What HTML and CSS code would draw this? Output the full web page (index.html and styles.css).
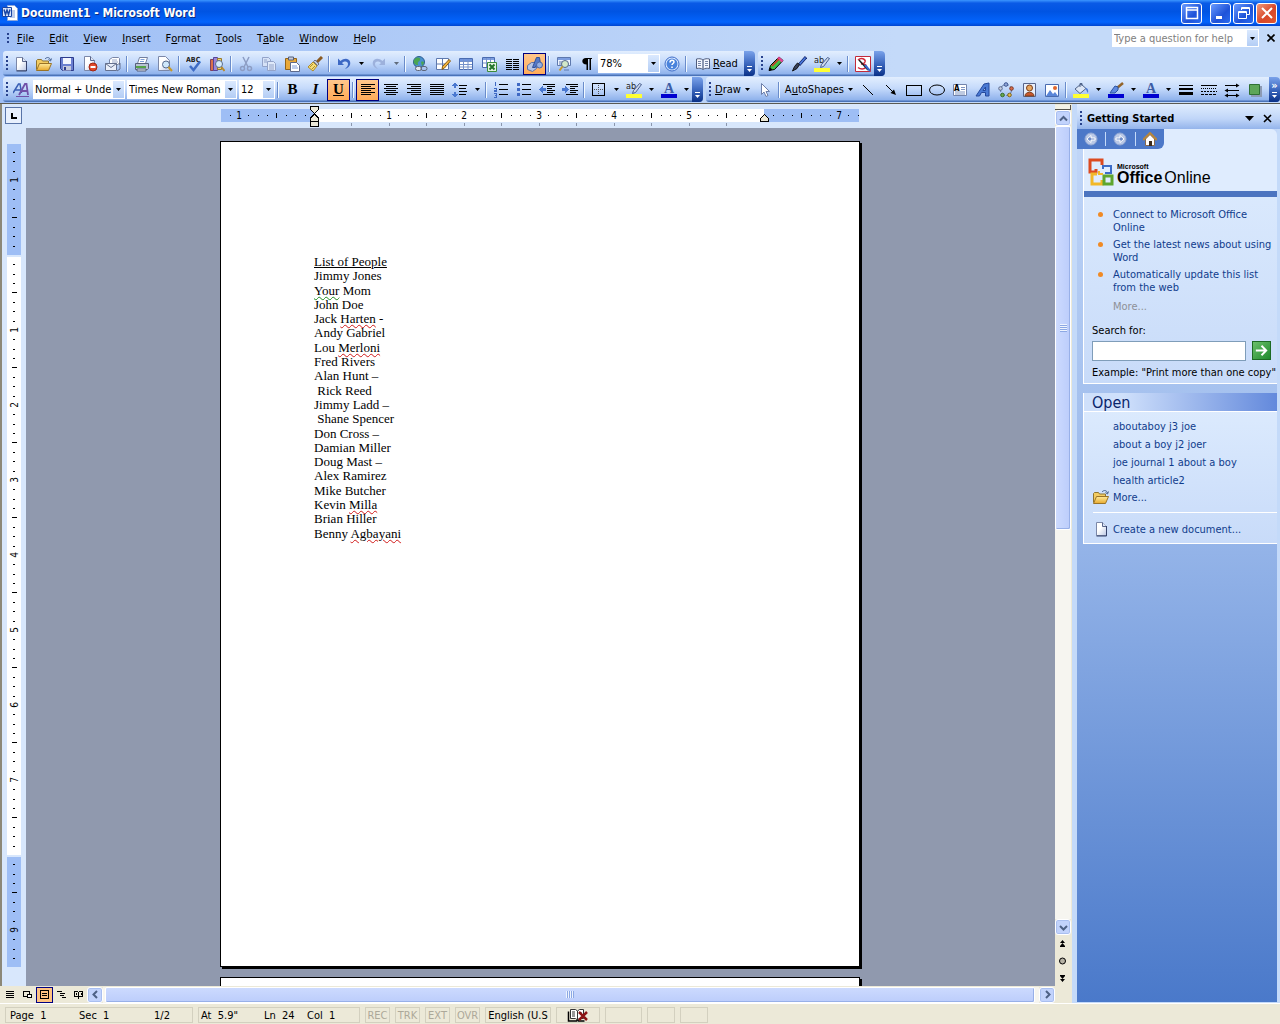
FILE: index.html
```html
<!DOCTYPE html>
<html lang="en">
<head>
    <meta charset="UTF-8">
    <meta name="viewport" content="width=device-width, initial-scale=1">
    <title>Document1 - Microsoft Word</title>
    <link rel="stylesheet" href="styles.css">
</head>
<body>

<!-- shared icons -->
<svg class="defs" aria-hidden="true">
    <linearGradient id="g-page" x1="0" y1="0" x2="1" y2="1"><stop offset="0.4" stop-color="#fff"/><stop offset="1" stop-color="#b9c6e4"/></linearGradient>
    <linearGradient id="g-folder" x1="0" y1="0" x2="0" y2="1"><stop offset="0" stop-color="#ffeb9c"/><stop offset="1" stop-color="#e8a92c"/></linearGradient>
    <symbol id="down" viewBox="0 0 5 3"><path d="M0 0h5L2.500 3z"/></symbol>
    <symbol id="i-new" viewBox="0 0 16 16"><path d="M3.500 1.500h6l4 4v9h-10z" fill="url(#g-page)" stroke="#7c88a8"/><path d="M9.500 1.500v4h4" fill="#dde5f5" stroke="#5a678c"/><path d="M13.500 5v10h-10" fill="none" stroke="#35426b"/></symbol>
    <symbol id="i-open" viewBox="0 0 16 16"><path d="M.5 13.500v-9l1-1h4l1 1.500h6v2" fill="#f3cc62" stroke="#8f7431"/><path d="M.5 14.500l3-7h12l-3 7z" fill="url(#g-folder)" stroke="#9a7326"/><path d="M9 3c2-2.500 5-1.500 5.500 1M12.500 3.500l2 1.500 1-2.500" fill="none" stroke="#44608f"/></symbol>
    <pattern id="inch-h" x="93" y="0" width="75" height="13" patternUnits="userSpaceOnUse"><path d="M9 6h1v1h-1zM19 6h1v1h-1zM28 6h1v1h-1zM37 4h1v5h-1zM47 6h1v1h-1zM56 6h1v1h-1zM66 6h1v1h-1z"/></pattern>
    <pattern id="inch-v" x="0" y="111" width="14" height="75" patternUnits="userSpaceOnUse"><path d="M6 9h2v1h-2zM6 19h2v1h-2zM6 28h2v1h-2zM5 37h5v1h-5zM6 47h2v1h-2zM6 56h2v1h-2zM6 66h2v1h-2z"/></pattern>
</svg>

<header class="titlebar">
    <svg class="icon" viewBox="0 0 16 16"><path d="M5.500.5h7l3 3v12h-10z" fill="#fff" stroke="#8ba6dc"/><path d="M8 6h5M8 8h5M8 10h5M8 12h5" stroke="#7d9ad8"/><path d="M.5 2.500h9v9h-9z" fill="#dbe6fb" stroke="#1b46a4"/><path d="M2 4.500l1.500 5L5 5l1.500 4.500L8 4.500" fill="none" stroke="#1b46a4" stroke-width="1.500"/></svg>
    <h1>Document1 - Microsoft Word</h1>
    <div class="window-buttons">
        <button class="wb first" aria-label="Full screen"><svg viewBox="0 0 16 16"><path d="M2.500 2.500h11v11h-11zM3 5h10" fill="none" stroke="#fff" stroke-width="1.500"/></svg></button>
        <button class="wb" aria-label="Minimize"><svg viewBox="0 0 16 16"><path d="M3 11h6v3H3z" fill="#fff"/></svg></button>
        <button class="wb" aria-label="Restore"><svg viewBox="0 0 16 16"><path d="M5.500 5V2.500h8v7H11M2.500 6.500h8v7h-8zM2.500 7.500h8M6 3.500h7" fill="none" stroke="#fff"/></svg></button>
        <button class="wb close" aria-label="Close"><svg viewBox="0 0 16 16"><path d="M3 3l10 10M13 3L3 13" stroke="#fff" stroke-width="2"/></svg></button>
    </div>
</header>

<nav class="menubar">
    <span class="grip"></span>
    <button><u>F</u>ile</button>
    <button><u>E</u>dit</button>
    <button><u>V</u>iew</button>
    <button><u>I</u>nsert</button>
    <button>F<u>o</u>rmat</button>
    <button><u>T</u>ools</button>
    <button>T<u>a</u>ble</button>
    <button><u>W</u>indow</button>
    <button><u>H</u>elp</button>
    <div class="combo ask">
        <input type="text" placeholder="Type a question for help" aria-label="Type a question for help">
        <span class="combo-arrow"><svg class="down"><use href="#down"/></svg></span>
    </div>
    <button class="close-doc" aria-label="Close document"><svg viewBox="0 0 8 8"><path d="M.5.5l7 7M7.500.5l-7 7" stroke="#000" stroke-width="1.600"/></svg></button>
</nav>

<div class="toolbar-row">
    <div class="toolbar">
        <span class="grip"></span>
        <button class="tb" aria-label="New"><svg class="icon"><use href="#i-new"/></svg></button>
        <button class="tb" aria-label="Open"><svg class="icon"><use href="#i-open"/></svg></button>
        <button class="tb" aria-label="Save"><svg class="icon" viewBox="0 0 16 16"><path d="M1.500 1.500h13v13h-11l-2-2z" fill="#6b7fd0" stroke="#2d3c8c"/><path d="M4 2h8v6H4z" fill="#f2f5ff"/><path d="M4 10h8v4.500H4z" fill="#c5c9dc"/><path d="M5 11h2v3H5z" fill="#2d3c8c"/></svg></button>
        <button class="tb" aria-label="Permission"><svg class="icon" viewBox="0 0 16 16"><path d="M2.500.5h6l4 4v10h-10z" fill="url(#g-page)" stroke="#7c88a8"/><path d="M8.500.5v4h4" fill="#dde5f5" stroke="#5a678c"/><circle cx="11" cy="11" r="4" fill="#e0492c" stroke="#a32612"/><path d="M8.500 11h5" stroke="#fff" stroke-width="2"/></svg></button>
        <button class="tb" aria-label="E-mail"><svg class="icon" viewBox="0 0 16 16"><path d="M4.500 7V3.500l3-2h6l1 1V9" fill="#fff" stroke="#7a86a6"/><path d="M7 4h5M7 6h6" stroke="#9aa8c8"/><path d="M.5 7.500h11v7H.5z" fill="#e9eef9" stroke="#65718f"/><path d="M.5 7.500l5.500 4 5.500-4M12 9l3-2v6l-3 2" fill="none" stroke="#65718f"/></svg></button>
        <span class="sep"></span>
        <button class="tb" aria-label="Print"><svg class="icon" viewBox="0 0 16 16"><path d="M5.500 1.500h8l-2 6h-8z" fill="#fff" stroke="#73809f"/><path d="M6.500 3.500h4M6 5.500h4" stroke="#7fa0d8"/><path d="M1.500 7.500h13v5l-1 1h-12z" fill="#b8c2d4" stroke="#56617c"/><path d="M2 10h10v2H2z" fill="#54a348"/><path d="M3 13h9v2H3z" fill="#e9eef6" stroke="#56617c"/></svg></button>
        <button class="tb" aria-label="Print preview"><svg class="icon" viewBox="0 0 16 16"><path d="M1.500.5h7l4 4v10h-11z" fill="url(#g-page)" stroke="#7c88a8"/><circle cx="9" cy="8.500" r="3.500" fill="#cfe8fa" stroke="#566a8c"/><path d="M11.500 11l3.500 4" stroke="#c89a28" stroke-width="2"/></svg></button>
        <span class="sep"></span>
        <button class="tb" aria-label="Spelling"><svg class="icon" viewBox="0 0 16 16"><text x="0" y="6" font-size="7" font-weight="bold" fill="#222">ABC</text><path d="M4 10l3.500 4L14 5.500" fill="none" stroke="#3e6cc6" stroke-width="2.500"/></svg></button>
        <button class="tb" aria-label="Research"><svg class="icon" viewBox="0 0 16 16"><path d="M1.500 3.500h3v11h-3z" fill="#d9714b" stroke="#83405a"/><path d="M4.500 1.500h4v13h-4z" fill="#9c86d6" stroke="#55459a"/><path d="M8.500 2.500h4v11h-4z" fill="#f2d16b" stroke="#967a2d"/><circle cx="10" cy="8" r="3.500" fill="#d8ecfb" stroke="#566a8c"/><path d="M12.500 11l3 4" stroke="#b98a2c" stroke-width="2"/></svg></button>
        <span class="sep"></span>
        <button class="tb" aria-label="Cut"><svg class="icon" viewBox="0 0 16 16"><path d="M5 1l5 10M11 1L6 11" fill="none" stroke="#8d9dc4" stroke-width="1.500"/><circle cx="4.500" cy="12.500" r="2" fill="none" stroke="#8d9dc4" stroke-width="1.500"/><circle cx="11.500" cy="12.500" r="2" fill="none" stroke="#8d9dc4" stroke-width="1.500"/></svg></button>
        <button class="tb" aria-label="Copy"><svg class="icon" viewBox="0 0 16 16"><path d="M1.500 1.500h6l2 2v7h-8z" fill="#d6e2f7" stroke="#93a3c9"/><path d="M6.500 5.500h6l2 2v7h-8z" fill="#dfe9fa" stroke="#93a3c9"/><path d="M8 9h5M8 11h5M8 13h5M3 4h3M3 6h3" stroke="#93a3c9"/></svg></button>
        <button class="tb" aria-label="Paste"><svg class="icon" viewBox="0 0 16 16"><path d="M1.500 2.500h11v11h-11z" fill="#e9a93a" stroke="#93641a"/><path d="M4.500 1h5v3h-5z" fill="#c8ccd8" stroke="#555f79"/><path d="M6.500 6.500h6l3 3v6h-9z" fill="#fff" stroke="#5d6a8c"/><path d="M8 10h5M8 12h6" stroke="#7d9ad8"/></svg></button>
        <button class="tb" aria-label="Format painter"><svg class="icon" viewBox="0 0 16 16"><path d="M15 1l-5 5" stroke="#8a5a21" stroke-width="3"/><path d="M8 4l4 4-1.500 1.500-4-4z" fill="#c5cad6" stroke="#6b738a"/><path d="M6 6l4 4-4 5-5-4z" fill="#f5dd75" stroke="#b08c2a"/><path d="M3 11l3-3M5 13l3-3" stroke="#b08c2a"/></svg></button>
        <span class="sep"></span>
        <button class="tb" aria-label="Undo"><svg class="icon" viewBox="0 0 16 16"><path d="M2 2.500V9h6L6 7c3-2.500 6-1.500 6 1 0 2-1.500 3.500-3 5 4-1.500 6-4 5-7.500-1.500-3.500-6-3.500-9.500-.5z" fill="#3d68c4"/></svg></button>
        <button class="split" aria-label="Undo list"><svg class="down"><use href="#down"/></svg></button>
        <button class="tb" aria-label="Redo"><svg class="icon" viewBox="0 0 16 16"><path d="M14 2.500V9H8l2-2C7 4.500 4 5.500 4 8c0 2 1.500 3.500 3 5-4-1.500-6-4-5-7.500C3.500 2 8 2 11.500 5z" fill="#9db1dc"/></svg></button>
        <button class="split dim" aria-label="Redo list"><svg class="down"><use href="#down"/></svg></button>
        <span class="sep"></span>
        <button class="tb" aria-label="Hyperlink"><svg class="icon" viewBox="0 0 16 16"><circle cx="7" cy="6" r="5.500" fill="#4a90d0" stroke="#2c5d8f"/><path d="M4 2c3-1 5 0 4 2S5 6 6 8s-3 1-4-1 0-4 2-5zM9 6c2-1 3 0 3 1l-2 3z" fill="#4aa552"/><rect x="3.500" y="10.500" width="6" height="4" rx="2" fill="#e2e6ee" stroke="#5c6578"/><rect x="9" y="10.500" width="6" height="4" rx="2" fill="none" stroke="#5c6578"/></svg></button>
        <button class="tb" aria-label="Tables and borders"><svg class="icon" viewBox="0 0 16 16"><path d="M1.500 2.500h12v11h-12zM1.500 8h12M7.500 2.500v11" fill="#fff" stroke="#5e79ae"/><path d="M14 3.500l1.500 1.500-6 7-2.500 1.500.5-3z" fill="#f2b43c" stroke="#8a5c14"/></svg></button>
        <button class="tb" aria-label="Insert table"><svg class="icon" viewBox="0 0 16 16"><path d="M1.500 2.500h13v11h-13z" fill="#fff" stroke="#4a6cb0"/><path d="M2 3h12v2H2z" fill="#6f94de"/><path d="M2 8.500h12M2 11h12M5.500 3v11M10 3v11M2 5.500h12" stroke="#7692ca"/></svg></button>
        <button class="tb" aria-label="Insert Excel worksheet"><svg class="icon" viewBox="0 0 16 16"><path d="M1.500 1.500h12v10h-12z" fill="#fff" stroke="#4a6cb0"/><path d="M2 2h11v2H2z" fill="#7d9ee0"/><path d="M2 7h11M5.500 2v9M9.500 2v9" stroke="#7692ca"/><path d="M6.500 6.500h9v9h-9z" fill="#e4f3e2" stroke="#3c8b3c"/><path d="M8.500 8.500l5 5M13.500 8.500l-5 5" stroke="#23742a" stroke-width="2"/></svg></button>
        <button class="tb" aria-label="Columns"><svg class="icon crisp" viewBox="0 0 16 16"><path d="M2 3.500h6M2 5.500h6M2 7.500h6M2 9.500h6M2 11.500h6M2 13.500h6M9 3.500h6M9 5.500h6M9 7.500h6M9 9.500h6M9 11.500h6M9 13.500h6" stroke="#000"/></svg></button>
        <button class="tb on" aria-label="Drawing"><svg class="icon" viewBox="0 0 16 16"><path d="M.5 9.500l4-3h5v6l-4 3-5-2z" fill="#b6c4e4" stroke="#5c71a8"/><path d="M5.500 11.500l4-10h3l1.500 10h-3l-.2-2H9l-.7 2z" fill="#5479c8" stroke="#33529a"/><circle cx="12.500" cy="9" r="3" fill="#93aee2" stroke="#4a66a6"/></svg></button>
        <span class="sep"></span>
        <button class="tb" aria-label="Document map"><svg class="icon" viewBox="0 0 16 16"><path d="M1.500 1.500h13v8h-13z" fill="#eef4ff" stroke="#5e79ae"/><path d="M2 2h12v2H2z" fill="#7d9ee0"/><path d="M3 6h4M3 8h3" stroke="#5e79ae"/><circle cx="9" cy="8" r="3.500" fill="#d2e8c8" stroke="#566a8c"/><path d="M6.500 10.500l-3 4" stroke="#c89a28" stroke-width="2"/><path d="M8 14h5" stroke="#5e79ae"/></svg></button>
        <button class="tb" aria-label="Show paragraph marks"><svg class="icon" viewBox="0 0 16 16"><path d="M7 2h6v1h-1v11h-1.500V3H9v11H7.500V8.500C2 8.500 2 2 7 2z"/></svg></button>
        <div class="combo zoom">
            <select aria-label="Zoom"><option>78%</option></select>
            <span class="combo-arrow"><svg class="down"><use href="#down"/></svg></span>
        </div>
        <button class="tb" aria-label="Help"><svg class="icon" viewBox="0 0 16 16"><circle cx="8" cy="8" r="7" fill="#dbe9ff" stroke="#3c6cc8"/><circle cx="8" cy="8" r="5.500" fill="#4a83dc"/><path d="M6 6.500c0-3 4-3 4-.5 0 1.500-2 1.500-2 3M8 10.500V12" fill="none" stroke="#fff" stroke-width="1.500"/></svg></button>
        <span class="sep"></span>
        <button class="tb read"><svg class="icon" viewBox="0 0 16 16"><path d="M8 4C6 2.500 4 2.500 1.500 3v9.500c2.500-.5 4.500-.5 6.500 1 2-1.500 4-1.500 6.500-1V3C12 2.500 10 2.500 8 4zv9" fill="#f4f7ff" stroke="#4f5c7c"/><path d="M8 4v9M3 5.500h3M3 7.500h3M3 9.500h3M10 5.500h3M10 7.500h3M10 9.500h3" stroke="#7886a8"/></svg><span><u>R</u>ead</span></button>
        <button class="endcap" aria-label="Toolbar options"><i></i><svg class="down"><use href="#down"/></svg></button>
    </div>
    <div class="toolbar">
        <span class="grip"></span>
        <button class="tb" aria-label="Pen"><svg class="icon" viewBox="0 0 16 16"><path d="M1 14.500l1.500-5L11 1l4 3.500-8.500 9z" fill="#3fbf45" stroke="#000"/><path d="M10 1.500l4.500 4" stroke="#e0489a" stroke-width="2.500"/><path d="M4 10l7-7" stroke="#d92a2a" stroke-width="1.500"/><path d="M1 15l1-3.500 2.500 2z"/></svg></button>
        <button class="tb" aria-label="Brush"><svg class="icon" viewBox="0 0 16 16"><path d="M15 1L8 9" stroke="#14246a" stroke-width="3"/><path d="M14.500 1.500L8 9" stroke="#4c7ce0" stroke-width="1.500"/><path d="M8.500 8.500l-2-1.500-3 3.500-2 4.500 4.500-2.500z" fill="#36405c" stroke="#111"/></svg></button>
        <button class="tb" aria-label="Highlighter"><svg class="icon" viewBox="0 0 16 16"><text x="0" y="7" font-size="9" fill="#222">ab</text><path d="M13.500 1.500l2 1-6 8-3 1 1-3z" fill="#cdd8ea" stroke="#4a6090"/><path d="M0 12h16v4H0z" fill="#ff3"/></svg></button>
        <button class="split" aria-label="Highlighter colors"><svg class="down"><use href="#down"/></svg></button>
        <span class="sep"></span>
        <button class="tb" aria-label="Stop inking"><svg class="icon" viewBox="0 0 16 16"><path d="M.5.5h15v15H.5z" fill="#fff" stroke="#c22a3a"/><path d="M3 4c3-3 8-1 7 2-1 2-4 1.500-4 1.500M6 8c4-.5 6 1 4.500 3.500-1.500 2-5 2-7.500 0" fill="none" stroke="#d3293c" stroke-width="1.500"/><path d="M4 4l9 10" stroke="#222" stroke-width="1.500"/><path d="M10 9l5 6" stroke="#3568d0" stroke-width="2"/></svg></button>
        <button class="endcap" aria-label="Toolbar options"><i></i><svg class="down"><use href="#down"/></svg></button>
    </div>
</div>

<div class="toolbar-row">
    <div class="toolbar">
        <span class="grip"></span>
        <button class="tb" aria-label="Styles and formatting"><svg class="icon" viewBox="0 0 16 16"><path d="M0 11L5.500 2H7l1.500 9M2.500 8h5" fill="none" stroke="#3a5fb4" stroke-width="1.500"/><path d="M6 13l6-11h1.500l1.500 11M8.500 9h6" fill="none" stroke="#7150a8" stroke-width="1.800"/><path d="M3 14.500h13" stroke="#7150a8"/></svg></button>
        <div class="combo style">
            <select aria-label="Style"><option>Normal + Unde</option></select>
            <span class="combo-arrow"><svg class="down"><use href="#down"/></svg></span>
        </div>
        <div class="combo font">
            <select aria-label="Font"><option>Times New Roman</option></select>
            <span class="combo-arrow"><svg class="down"><use href="#down"/></svg></span>
        </div>
        <div class="combo size">
            <select aria-label="Font size"><option>12</option></select>
            <span class="combo-arrow"><svg class="down"><use href="#down"/></svg></span>
        </div>
        <span class="sep"></span>
        <button class="tb letter">B</button>
        <button class="tb letter"><em>I</em></button>
        <button class="tb letter on"><u>U</u></button>
        <span class="sep"></span>
        <button class="tb on" aria-label="Align left"><svg class="icon crisp" viewBox="0 0 16 16"><path d="M1 2.500h14M1 4.500h10M1 6.500h14M1 8.500h10M1 10.500h14M1 12.500h10" stroke="#000"/></svg></button>
        <button class="tb" aria-label="Center"><svg class="icon crisp" viewBox="0 0 16 16"><path d="M1 2.500h14M3 4.500h10M1 6.500h14M3 8.500h10M1 10.500h14M3 12.500h10" stroke="#000"/></svg></button>
        <button class="tb" aria-label="Align right"><svg class="icon crisp" viewBox="0 0 16 16"><path d="M1 2.500h14M5 4.500h10M1 6.500h14M5 8.500h10M1 10.500h14M5 12.500h10" stroke="#000"/></svg></button>
        <button class="tb" aria-label="Justify"><svg class="icon crisp" viewBox="0 0 16 16"><path d="M1 2.500h14M1 4.500h14M1 6.500h14M1 8.500h14M1 10.500h14M1 12.500h14" stroke="#000"/></svg></button>
        <button class="tb" aria-label="Line spacing"><svg class="icon crisp" viewBox="0 0 16 16"><path d="M7 3.500h8M7 6.500h7M7 9.500h8M7 12.500h7" stroke="#000"/><path d="M3 0l3 4H4v2H2V4H0zM3 16l3-4H4v-2H2v2H0z" fill="#4a78d0"/></svg></button>
        <button class="split" aria-label="Line spacing list"><svg class="down"><use href="#down"/></svg></button>
        <span class="sep"></span>
        <button class="tb" aria-label="Numbering"><svg class="icon crisp" viewBox="0 0 16 16"><path d="M6 2.500h9M6 7.500h9M6 12.500h9" stroke="#000"/><path d="M2.500 0v4M1 6.500h2.500v1.500H1.500V9H4M1 11.500h2.500v3.500H1M1.500 13.500h2" fill="none" stroke="#3f69c4"/></svg></button>
        <button class="tb" aria-label="Bullets"><svg class="icon crisp" viewBox="0 0 16 16"><path d="M6 2.500h9M6 7.500h9M6 12.500h9" stroke="#000"/><path d="M1 1h3v3H1zM1 6h3v3H1zM1 11h3v3H1z" fill="#3f69c4"/></svg></button>
        <button class="tb" aria-label="Decrease indent"><svg class="icon crisp" viewBox="0 0 16 16"><path d="M4 2.500h12M8 4.500h8M8 6.500h5M8 8.500h8M8 10.500h6M4 12.500h12" stroke="#000"/><path d="M0 7.500L4 4v2h3v3H4v2z" fill="#4a78d0"/></svg></button>
        <button class="tb" aria-label="Increase indent"><svg class="icon crisp" viewBox="0 0 16 16"><path d="M4 2.500h12M8 4.500h8M8 6.500h5M8 8.500h8M8 10.500h6M4 12.500h12" stroke="#000"/><path d="M7 7.500L3 4v2H0v3h3v2z" fill="#4a78d0"/></svg></button>
        <span class="sep"></span>
        <button class="tb" aria-label="Borders"><svg class="icon crisp" viewBox="0 0 16 16"><path d="M1.500 1.500h12v12h-12z" fill="none" stroke="#000"/><path d="M7.500 3v10M3 7.500h10" stroke="#555" stroke-dasharray="1 1"/></svg></button>
        <button class="split" aria-label="Borders list"><svg class="down"><use href="#down"/></svg></button>
        <button class="tb" aria-label="Highlight"><svg class="icon" viewBox="0 0 16 16"><text x="0" y="7" font-size="9" fill="#222">ab</text><path d="M13.500 1.500l2 1-6 8-3 1 1-3z" fill="#cdd8ea" stroke="#4a6090"/><path d="M0 12h16v4H0z" fill="#ff3"/></svg></button>
        <button class="split" aria-label="Highlight colors"><svg class="down"><use href="#down"/></svg></button>
        <button class="tb" aria-label="Font color"><svg class="icon" viewBox="0 0 16 16"><text x="3" y="11" class="icon-serif" font-size="14" fill="#3d5da6">A</text><path d="M0 12h16v4H0z" fill="#0000d0"/></svg></button>
        <button class="split" aria-label="Font colors"><svg class="down"><use href="#down"/></svg></button>
        <button class="endcap" aria-label="Toolbar options"><i></i><svg class="down"><use href="#down"/></svg></button>
    </div>
    <div class="toolbar wide">
        <span class="grip"></span>
        <button class="tb text"><span><u>D</u>raw</span><svg class="down"><use href="#down"/></svg></button>
        <button class="tb" aria-label="Select objects"><svg class="icon" viewBox="0 0 16 16"><path d="M5.500 1.500v11l2.500-2.500 2 4.500 2-1-2-4h3.500z" fill="#fff" stroke="#6d7ea8"/></svg></button>
        <span class="sep"></span>
        <button class="tb text"><span>A<u>u</u>toShapes</span><svg class="down"><use href="#down"/></svg></button>
        <button class="tb" aria-label="Line"><svg class="icon" viewBox="0 0 16 16"><path d="M3 3l10 10" stroke="#000"/></svg></button>
        <button class="tb" aria-label="Arrow"><svg class="icon" viewBox="0 0 16 16"><path d="M3 3l7 7" stroke="#000"/><path d="M13 13L11 7.500 7.500 11z"/></svg></button>
        <button class="tb" aria-label="Rectangle"><svg class="icon crisp" viewBox="0 0 16 16"><path d="M.5 3.500h15v10H.5z" fill="none" stroke="#000"/></svg></button>
        <button class="tb" aria-label="Oval"><svg class="icon" viewBox="0 0 16 16"><ellipse cx="8" cy="8" rx="7.500" ry="5" fill="none" stroke="#000"/></svg></button>
        <button class="tb" aria-label="Text box"><svg class="icon" viewBox="0 0 16 16"><path d="M1.500 2.500h13v11h-13z" fill="#fff" stroke="#7284ac"/><text x="2" y="9" font-size="8" font-weight="bold">A</text><path d="M9 5.500h4M9 7.500h4M3 10h10M3 12h10" stroke="#7f95c2"/></svg></button>
        <button class="tb" aria-label="WordArt"><svg class="icon" viewBox="0 0 16 16"><path d="M1 14l8-12 5-1v13h-3.500v-3.500H6.500L4.500 14zM8 8.500h2.500V5z" fill="#4a7ad4" stroke="#24489c" fill-rule="evenodd"/></svg></button>
        <button class="tb" aria-label="Diagram"><svg class="icon" viewBox="0 0 16 16"><circle cx="8" cy="8" r="5.500" fill="none" stroke="#4d638f" stroke-dasharray="3 2"/><circle cx="8" cy="2.500" r="1.800" fill="#8fa6d8" stroke="#3e5690"/><circle cx="2.500" cy="6.500" r="1.800" fill="#c7cedf" stroke="#5c6b8c"/><circle cx="13.500" cy="6.500" r="1.800" fill="#d76b4a" stroke="#7c3a2a"/><circle cx="4.500" cy="13" r="1.800" fill="#67a84e" stroke="#376b2a"/><circle cx="11.500" cy="13" r="1.800" fill="#e5be4d" stroke="#7d6320"/></svg></button>
        <button class="tb" aria-label="Clip art"><svg class="icon" viewBox="0 0 16 16"><path d="M2.500 1.500h12v13h-12z" fill="#e8eefa" stroke="#56648a"/><circle cx="8.500" cy="6" r="3" fill="#e8a860" stroke="#7a3e1c"/><path d="M4 14c0-5 9-5 9 0z" fill="#c9572c" stroke="#7a3e1c"/></svg></button>
        <button class="tb" aria-label="Picture"><svg class="icon" viewBox="0 0 16 16"><path d="M1.500 2.500h13v12h-13z" fill="#fff" stroke="#4a6cb0"/><path d="M2 14l4-6 3 4 2-2 3 4z" fill="#5a86d8"/><circle cx="11" cy="6" r="2" fill="#e0662e"/></svg></button>
        <span class="sep"></span>
        <button class="tb" aria-label="Fill color"><svg class="icon" viewBox="0 0 16 16"><path d="M2 7l6-5 5 4.500-6 5z" fill="#dce6f6" stroke="#4f6388"/><path d="M7 5V1.500h2V4" fill="none" stroke="#4f6388"/><path d="M12 6c3 0 3.500 2 3 5-1.500-1-1-3-3-5z" fill="#4a78d0"/><path d="M0 12h16v4H0z" fill="#ff3"/></svg></button>
        <button class="split" aria-label="Fill colors"><svg class="down"><use href="#down"/></svg></button>
        <button class="tb" aria-label="Line color"><svg class="icon" viewBox="0 0 16 16"><path d="M15 1L9 6" stroke="#93642a" stroke-width="2.500"/><path d="M10 5L7 4 4 8l-2 3h5l3-3z" fill="#5f8ae0" stroke="#2f549f"/><path d="M0 12h16v4H0z" fill="#0000d0"/></svg></button>
        <button class="split" aria-label="Line colors"><svg class="down"><use href="#down"/></svg></button>
        <button class="tb" aria-label="Font color"><svg class="icon" viewBox="0 0 16 16"><text x="3" y="11" class="icon-serif" font-size="14" fill="#3d5da6">A</text><path d="M0 12h16v4H0z" fill="#0000d0"/></svg></button>
        <button class="split" aria-label="Font colors"><svg class="down"><use href="#down"/></svg></button>
        <button class="tb" aria-label="Line style"><svg class="icon crisp" viewBox="0 0 16 16"><path d="M1 3h14v1H1zM1 6h14v2H1zM1 10h14v3H1z"/></svg></button>
        <button class="tb" aria-label="Dash style"><svg class="icon crisp" viewBox="0 0 16 16"><path d="M0 3.500h16" stroke="#000"/><path d="M0 6.500h16" stroke="#000" stroke-dasharray="1 1"/><path d="M0 9.500h16" stroke="#000" stroke-dasharray="2 1"/><path d="M0 12.500h16" stroke="#000" stroke-dasharray="3 1"/></svg></button>
        <button class="tb" aria-label="Arrow style"><svg class="icon" viewBox="0 0 16 16"><path d="M1 3.500h12M3 8.500h12M3 13.500h10" stroke="#000"/><path d="M12 1.500l3.500 2-3.500 2zM4 6.500l-3.500 2 3.500 2zM4 11.500l-3.500 2 3.500 2zM12 11.500l3.500 2-3.500 2z"/></svg></button>
        <button class="tb" aria-label="Shadow style"><svg class="icon" viewBox="0 0 16 16"><path d="M4 4h11v11H4z" fill="#8c9ab4"/><path d="M2.500 2.500h10v10h-10z" fill="#5da658" stroke="#2f7034"/></svg></button>
        <button class="endcap" aria-label="Toolbar options"><b>»</b><i></i><svg class="down"><use href="#down"/></svg></button>
    </div>
</div>

<main class="workspace">
    <section class="editor">
        <div class="corner"><button class="tab-type" aria-label="Left tab"><svg viewBox="0 0 6 6"><path d="M0 0h2v4h4v2H0z"/></svg></button></div>

        <div class="ruler-h">
            <svg width="638" height="20" viewBox="0 0 638 20">
                <path d="M0 0h638v13H0z" fill="#9ebef5"/>
                <path d="M93 0h450v13H93z" fill="#fff"/>
                <path d="M0 0h638v13H0z" fill="url(#inch-h)"/>
                <g class="digits"><text x="18" y="10">1</text><text x="168" y="10">1</text><text x="243" y="10">2</text><text x="318" y="10">3</text><text x="393" y="10">4</text><text x="468" y="10">5</text><text x="618" y="10">7</text></g>
                <path d="M130 14v3M168 14v3M205 14v3M243 14v3M280 14v3M318 14v3M355 14v3M393 14v3M430 14v3M468 14v3M505 14v3" stroke="#8c97ad"/>
                <path d="M89.500-2.500h8v3l-4 4-4-4zM93.500 5l4 4v3h-8V9zM89.500 12.500h8v5h-8zM539.500 12.500v-3l4-4 4 4v3z" fill="#ece9d8" stroke="#000"/>
            </svg>
        </div>

        <div class="ruler-v">
            <svg width="14" height="823" viewBox="0 0 14 823">
                <path d="M0 0h14v823H0z" fill="#9ebef5"/>
                <path d="M0 111h14v602H0z" fill="#d8e7fc"/>
                <path d="M0 113h14v598H0z" fill="#fff"/>
                <path d="M0 0h14v823H0z" fill="url(#inch-v)"/>
                <g class="digits"><text transform="translate(11 36) rotate(-90)">1</text><text transform="translate(11 186) rotate(-90)">1</text><text transform="translate(11 261) rotate(-90)">2</text><text transform="translate(11 336) rotate(-90)">3</text><text transform="translate(11 411) rotate(-90)">4</text><text transform="translate(11 486) rotate(-90)">5</text><text transform="translate(11 561) rotate(-90)">6</text><text transform="translate(11 636) rotate(-90)">7</text><text transform="translate(11 786) rotate(-90)">9</text></g>
            </svg>
        </div>

        <div class="canvas">
            <article class="page">
                <p><u>List of People</u></p>
                <p>Jimmy Jones</p>
                <p><span class="grammar">Your</span> Mom</p>
                <p>John Doe</p>
                <p>Jack <span class="spelling">Harten</span> -</p>
                <p>Andy Gabriel</p>
                <p>Lou <span class="spelling">Merloni</span></p>
                <p>Fred Rivers</p>
                <p>Alan Hunt –</p>
                <p>&nbsp;Rick Reed</p>
                <p>Jimmy Ladd –</p>
                <p>&nbsp;Shane Spencer</p>
                <p>Don Cross –</p>
                <p>Damian Miller</p>
                <p>Doug Mast –</p>
                <p>Alex Ramirez</p>
                <p>Mike Butcher</p>
                <p>Kevin <span class="spelling">Milla</span></p>
                <p>Brian Hiller</p>
                <p>Benny <span class="spelling">Agbayani</span></p>
            </article>
            <article class="page"></article>
        </div>

        <div class="vscroll">
            <span class="splitter"></span>
            <button class="sb" aria-label="Scroll up"><svg viewBox="0 0 9 9"><path d="M1 6.500L4.500 3 8 6.500"/></svg></button>
            <div class="track"><span class="thumb"></span></div>
            <button class="sb" aria-label="Scroll down"><svg viewBox="0 0 9 9"><path d="M1 3l3.500 3.500L8 3"/></svg></button>
            <div class="browse">
                <button aria-label="Previous page"><svg viewBox="0 0 7 8"><path d="M3.500 0L6 3H1zM3.500 3L6 6H1zM1 6h5v1H1z"/></svg></button>
                <button aria-label="Select browse object"><svg viewBox="0 0 7 8"><circle cx="3.500" cy="4" r="3" fill="#b5b2a4" stroke="#000"/></svg></button>
                <button aria-label="Next page"><svg viewBox="0 0 7 8"><path d="M1 1h5v1H1zM1 2h5L3.500 5zM1 5h5L3.500 8z"/></svg></button>
            </div>
        </div>

        <div class="hscroll">
            <button class="view" aria-label="Normal view"><svg viewBox="0 0 9 9"><path d="M0 1.500h8M0 3.500h8M0 5.500h8M0 7.500h8" stroke="#000"/></svg></button>
            <button class="view" aria-label="Web layout view"><svg viewBox="0 0 9 9"><path d="M.5 1.500h6v5h-6z" fill="none" stroke="#000"/><circle cx="6.500" cy="6" r="2" fill="#fff" stroke="#000"/></svg></button>
            <button class="view on" aria-label="Print layout view"><svg viewBox="0 0 9 9"><path d="M.5.5h8v8h-8zM2 3.500h5M2 5.500h5" fill="none" stroke="#000"/></svg></button>
            <button class="view" aria-label="Outline view"><svg viewBox="0 0 9 9"><path d="M0 1.500h5M3 3.500h5M3 5.500h4M5 7.500h4" stroke="#000"/></svg></button>
            <button class="view" aria-label="Reading layout view"><svg viewBox="0 0 9 9"><path d="M.5 1.500h3l1 1 1-1h3v5h-3l-1 1-1-1h-3zM4.500 2v7M2 3v2M7 3v2" fill="none" stroke="#000"/></svg></button>
            <button class="sb" aria-label="Scroll left"><svg viewBox="0 0 9 9"><path d="M6 1L2.500 4.500 6 8"/></svg></button>
            <div class="track"><span class="thumb"></span></div>
            <button class="sb" aria-label="Scroll right"><svg viewBox="0 0 9 9"><path d="M3 1l3.500 3.500L3 8"/></svg></button>
        </div>
    </section>

    <aside class="taskpane">
        <header class="pane-header">
            <span class="grip"></span>
            <h2>Getting Started</h2>
            <button aria-label="Other task panes"><svg viewBox="0 0 9 9"><path d="M0 2h9L4.500 7z"/></svg></button>
            <button aria-label="Close pane"><svg viewBox="0 0 9 9"><path d="M1 1l7 7M8 1L1 8" stroke="#000" stroke-width="1.600"/></svg></button>
        </header>
        <div class="pane-body">
            <div class="pane-nav">
                <div class="nav-tab">
                    <button aria-label="Back"><svg viewBox="0 0 14 14"><circle cx="7" cy="7" r="6" fill="#b9c8e6" stroke="#93a8d4"/><path d="M3 7l4-3.500V6h4v2H7v2.500z" fill="#6f8cc8" stroke="#fff"/></svg></button>
                    <button aria-label="Forward"><svg viewBox="0 0 14 14"><circle cx="7" cy="7" r="6" fill="#b9c8e6" stroke="#93a8d4"/><path d="M11 7L7 3.500V6H3v2h4v2.500z" fill="#6f8cc8" stroke="#fff"/></svg></button>
                    <button aria-label="Home"><svg viewBox="0 0 14 14"><path d="M2.500 7v6.500h9V7L7 2.500z" fill="#fff" stroke="#8a6a4a"/><path d="M0 8l7-7 7 7" fill="none" stroke="#b8863a" stroke-width="2"/><path d="M6 9h3v5H6z" fill="#3c2a1a"/></svg></button>
                </div>
            </div>
            <section class="card">
                <div class="logo">
                    <svg width="28" height="28" viewBox="0 0 28 28" fill="none"><path d="M14 7V2H2v12h6v-3" stroke="#dc4a20" stroke-width="3"/><path d="M15 11V8h8v7h-6" stroke="#3c6cc8" stroke-width="2"/><path d="M9 16H4v10h10v-4" stroke="#f2b828" stroke-width="3"/><path d="M16 18h8v8h-8z" stroke="#5fa62e" stroke-width="3"/><path d="M11 13v3h4" stroke="#f2b828" stroke-width="2"/></svg>
                    <div class="wordmark"><small>Microsoft</small><div><b>Office</b><span>Online</span></div></div>
                </div>
                <ul class="links">
                    <li><a href="#">Connect to Microsoft Office Online</a></li>
                    <li><a href="#">Get the latest news about using Word</a></li>
                    <li><a href="#">Automatically update this list from the web</a></li>
                </ul>
                <a class="more" href="#">More...</a>
                <form class="search">
                    <label for="search">Search for:</label>
                    <div class="search-row">
                        <input type="text" id="search">
                        <button type="button" aria-label="Go"><svg viewBox="0 0 18 18"><path d="M3 9h11M9 4l5 5-5 5" fill="none" stroke="#fff" stroke-width="2"/></svg></button>
                    </div>
                    <p>Example: "Print more than one copy"</p>
                </form>
            </section>
            <section class="card open">
                <h3>Open</h3>
                <ul class="files">
                    <li><a href="#">aboutaboy j3 joe</a></li>
                    <li><a href="#">about a boy j2 joer</a></li>
                    <li><a href="#">joe journal 1 about a boy</a></li>
                    <li><a href="#">health article2</a></li>
                </ul>
                <a class="action" href="#"><svg class="icon"><use href="#i-open"/></svg>More...</a>
                <hr>
                <a class="action create" href="#"><svg class="icon"><use href="#i-new"/></svg>Create a new document...</a>
            </section>
        </div>
    </aside>
</main>

<footer class="statusbar">
    <div class="cell where"><span>Page&nbsp; 1</span><span>Sec&nbsp; 1</span><span>1/2</span></div>
    <div class="cell pos"><span>At&nbsp; 5.9"</span><span>Ln&nbsp; 24</span><span>Col&nbsp; 1</span></div>
    <div class="cell mode">REC</div>
    <div class="cell mode">TRK</div>
    <div class="cell mode">EXT</div>
    <div class="cell mode">OVR</div>
    <div class="cell lang">English (U.S</div>
    <div class="cell book"><svg width="22" height="13" viewBox="0 0 22 13"><path d="M1.500 2.500V12h8l1-1 1 1h6" fill="none" stroke="#000" stroke-width="1.500"/><path d="M3.500.5h5l2 1.500 2-1.500h4v9h-4l-2 1.500-2-1.500h-5zM10.500 2v9M5 3h3M5 5h3M5 7h3M12 4h3" fill="#fff" stroke="#333"/><path d="M12 3l8 8M20 3l-8 8" stroke="#8c1414" stroke-width="2.500"/></svg></div>
    <div class="cell wide-blank"></div>
    <div class="cell blank"></div>
    <div class="cell blank"></div>
</footer>

</body>
</html>
```
FILE: styles.css
```css
* {
    box-sizing: border-box;
    margin: 0;
    padding: 0;
}

body {
    display: flex;
    flex-direction: column;
    height: 100vh;
    overflow: hidden;
    font: 11px/13px "DejaVu Sans Condensed", "DejaVu Sans", sans-serif;
    color: #000;
    background: linear-gradient(90deg, #9ebef5, #c4daf9 70%);
    user-select: none;
}

button {
    display: flex;
    align-items: center;
    justify-content: center;
    font: inherit;
    color: inherit;
    border: none;
    background: none;
}

input, select {
    font: inherit;
    color: inherit;
}

a {
    color: #103c8c;
    text-decoration: none;
}

ul {
    list-style: none;
}

svg {
    display: block;
    flex: none;
}

.defs {
    position: absolute;
    width: 0;
    height: 0;
}

.icon {
    width: 16px;
    height: 16px;
}

.crisp {
    shape-rendering: crispEdges;
}

.icon-serif {
    font-family: "Liberation Serif", serif;
    font-weight: bold;
}

.down {
    width: 5px;
    height: 3px;
}

.grip {
    flex: none;
    width: 2px;
    height: 15px;
    margin-right: 1px;
    background: repeating-linear-gradient(#27418c 0 2px, transparent 2px 4px);
}

/* title bar */
.titlebar {
    display: flex;
    align-items: center;
    height: 26px;
    padding: 0 3px 0 2px;
    gap: 3px;
    color: #fff;
    background: linear-gradient(#3c96ff 0, #0a5ae6 12%, #0054e3 45%, #0364fd 85%, #0045d0 100%);
}

.titlebar h1 {
    flex: 1;
    font-size: 12px;
    text-shadow: 1px 1px #0a2a80;
}

.window-buttons {
    display: flex;
    gap: 2px;
}

.wb {
    width: 21px;
    height: 21px;
    border: 1px solid #fff;
    border-radius: 3px;
    background: linear-gradient(135deg, #6a9bff, #1e52d8 60%, #2a6cf0);
}

.wb.first {
    margin-right: 6px;
}

.wb svg {
    width: 16px;
    height: 16px;
}

.wb.close {
    background: linear-gradient(135deg, #f09a7c, #d8482a 55%, #e0562e);
}

/* menus */
.menubar {
    display: flex;
    align-items: center;
    height: 24px;
    padding: 0 4px 0 7px;
}

.menubar .grip {
    height: 10px;
}

.menubar > button {
    padding: 0 8px 0 7px;
    height: 20px;
    white-space: pre;
}

.menubar .close-doc {
    width: 8px;
    padding: 0;
    margin: 0 1px 0 8px;
}

.close-doc svg {
    width: 8px;
    height: 8px;
}

.combo {
    display: flex;
    height: 19px;
    background: #fff;
}

.combo select,
.combo input {
    flex: 1;
    min-width: 0;
    padding: 0 0 0 2px;
    border: none;
    outline: none;
    background: none;
    appearance: none;
}

.combo-arrow {
    display: flex;
    align-items: center;
    justify-content: center;
    width: 11px;
    margin: 1px 1px 1px 0;
    background: linear-gradient(#dbe9fe, #b3cdf5);
}

.ask {
    width: 147px;
    height: 18px;
    margin-left: auto;
}

.ask input::placeholder {
    color: #808080;
    opacity: 1;
}

/* toolbars */
.toolbar-row {
    display: flex;
    gap: 3px;
    height: 26px;
    padding: 1px 0 0 3px;
}

.toolbar {
    display: flex;
    align-items: center;
    height: 25px;
    padding-left: 3px;
    border-radius: 3px 4px 4px 3px;
    background: linear-gradient(#e2eefe, #c5dafb 45%, #8fb2ec 92%, #4a73b8 96%);
}

.toolbar.wide {
    flex: 1;
}

.tb {
    flex: none;
    width: 23px;
    height: 22px;
}

.tb.on {
    border: 1px solid #000080;
    background: linear-gradient(#ffc78c, #ffab58);
}

.tb.text {
    width: auto;
    padding: 0 3px;
    gap: 4px;
}

.tb.read {
    width: 55px;
    gap: 2px;
}

.tb.letter {
    font: bold 15px "Liberation Serif", serif;
}

.split {
    width: 12px;
    height: 22px;
}

.split.dim {
    opacity: 0.5;
}

.sep {
    width: 2px;
    height: 16px;
    margin: 0 2px;
    border-left: 1px solid #6a8ccb;
    border-right: 1px solid #f1f9ff;
}

.endcap {
    align-self: stretch;
    flex-direction: column;
    justify-content: flex-end;
    gap: 2px;
    width: 11px;
    margin-left: auto;
    padding-bottom: 4px;
    border-radius: 0 4px 4px 0;
    background: linear-gradient(#7aa2ea, #3c68bf 50%, #0a3188);
    fill: #fff;
}

.endcap i {
    width: 5px;
    height: 1px;
    background: #fff;
}

.endcap b {
    color: #fff;
    line-height: 9px;
}

.style {
    width: 92px;
    margin: 0 2px 0 1px;
}

.font {
    width: 110px;
    margin-right: 2px;
}

.size {
    width: 36px;
}

.zoom {
    width: 62px;
}

/* editor */
.workspace {
    display: flex;
    flex: 1;
    min-height: 0;
    margin-top: 1px;
    border-top: 1px solid #5b5a52;
}

.editor {
    display: grid;
    grid-template-columns: 26px 1fr 17px;
    grid-template-rows: 24px minmax(0, 1fr) 17px;
    flex: 1;
    min-width: 0;
    background: #d8e7fc;
}

.corner {
    padding: 3px 0 0 3px;
    border-left: 2px solid #8c8878;
}

.tab-type {
    width: 17px;
    height: 17px;
    border: 1px solid #5874a8;
    background: #e8f0fd;
}

.tab-type svg {
    width: 6px;
    height: 6px;
}

.ruler-h {
    display: flex;
    justify-content: center;
    padding: 5px 1px 0 0;
}

.ruler-h svg,
.ruler-v svg {
    overflow: visible;
    shape-rendering: crispEdges;
}

.digits {
    font-size: 10px;
    text-anchor: middle;
}

.ruler-v {
    padding: 16px 0 0 5px;
    border-left: 2px solid #8c8878;
    overflow: hidden;
}

.canvas {
    display: flex;
    flex-direction: column;
    align-items: center;
    gap: 10px;
    padding: 13px 1px 0 0;
    overflow: hidden;
    background: #9099ae;
}

.page {
    flex: none;
    width: 640px;
    height: 826px;
    padding: 113px 93px;
    border: 1px solid #000;
    box-shadow: 2px 2px #000;
    background: #fff;
    font: 13px/1.1 "Liberation Serif", "Times New Roman", serif;
}

.spelling {
    text-decoration: underline wavy #d01818 1px;
}

.grammar {
    text-decoration: underline wavy #1c8c1c 1px;
}

/* scroll bars */
.vscroll {
    grid-column: 3;
    grid-row: 1 / 4;
    display: flex;
    flex-direction: column;
    padding: 1px 1px 0 0;
    background: #ece9d8;
}

.splitter {
    height: 5px;
    border: 1px solid #55534a;
    border-width: 0 1px 1px 0;
    background: #f4f2e6;
}

.track {
    flex: 1;
    background: #f6f5f0;
}

.sb {
    flex: none;
    width: 16px;
    height: 16px;
    border: 1px solid #fff;
    border-radius: 3px;
    background: #c2d3fc;
    box-shadow: inset 0 0 0 1px #a9bff0;
}

.sb svg {
    width: 9px;
    height: 9px;
    fill: none;
    stroke: #4d6185;
    stroke-width: 2;
}

.thumb {
    display: block;
    border: 1px solid #fff;
    border-radius: 2px;
    box-shadow: inset -1px -1px #98b0e8;
}

.vscroll .thumb {
    height: 51%;
    background:
        repeating-linear-gradient(#eef4fe 0 1px, #8ca8e4 1px 2px) center / 7px 8px no-repeat,
        linear-gradient(90deg, #ccdafe, #bccdfb);
}

.hscroll .thumb {
    height: 16px;
    margin: 0 4px 0 2px;
    background:
        repeating-linear-gradient(90deg, #eef4fe 0 1px, #8ca8e4 1px 2px) center / 8px 7px no-repeat,
        linear-gradient(#ccdafe, #bccdfb);
}

.browse {
    display: flex;
    flex-direction: column;
    height: 68px;
    padding: 0 2px 17px 0;
}

.browse button {
    flex: 1;
}

.browse svg {
    width: 7px;
    height: 8px;
}

.hscroll {
    grid-column: 1 / 3;
    grid-row: 3;
    display: flex;
    align-items: center;
    padding-left: 2px;
    background: #ece9d8;
}

.view {
    width: 17px;
    height: 16px;
}

.view.on {
    border: 1px solid #000080;
    background: #ffc382;
}

.view svg {
    width: 9px;
    height: 9px;
    shape-rendering: crispEdges;
}

/* task pane */
.taskpane {
    display: flex;
    flex-direction: column;
    width: 208px;
    padding: 0 3px 1px 5px;
    background: #c4daf9;
}

.pane-header {
    display: flex;
    align-items: center;
    height: 25px;
    padding: 3px 4px 0 3px;
    margin-right: -3px;
    background: linear-gradient(#e0edfe, #bfd5f8 60%, #94b4eb);
}

.pane-header h2 {
    flex: 1;
    padding-left: 4px;
    font-size: 11px;
}

.pane-header button {
    width: 18px;
    height: 18px;
}

.pane-header svg {
    width: 9px;
    height: 9px;
}

.pane-body {
    flex: 1;
    background: linear-gradient(#c2d7f8, #98b7ea 45%, #4a79ca);
}

.pane-nav {
    height: 20px;
    border-radius: 0 6px 0 0;
    background: #dfecfe;
}

.nav-tab {
    display: flex;
    width: 87px;
    height: 20px;
    border-radius: 0 0 6px 0;
    background: #4c78c8;
}

.nav-tab button {
    flex: 1;
    height: 14px;
    margin-top: 3px;
}

.nav-tab button + button {
    border-left: 1px solid #c4daf9;
}

.nav-tab svg {
    width: 14px;
    height: 14px;
}

.card {
    margin-left: 6px;
    border: 1px solid #fff;
    border-width: 0 0 1px 1px;
    background: linear-gradient(#deecfe, #c8dbf9);
}

.logo {
    display: flex;
    align-items: center;
    gap: 1px;
    height: 48px;
    padding: 4px 4px 0;
    border-bottom: 6px solid #4c74c0;
    background: #dfecfe;
}

.wordmark {
    padding-top: 4px;
    font: 16px/15px "Liberation Sans", Arial, sans-serif;
    white-space: nowrap;
}

.wordmark small {
    display: block;
    font-size: 7px;
    font-weight: bold;
    line-height: 7px;
}

.wordmark div {
    display: flex;
    gap: 2px;
}

.links {
    padding: 11px 0 0 29px;
}

.links li {
    position: relative;
    margin-bottom: 4px;
}

/* orange bullet */
.links li::before {
    content: "";
    position: absolute;
    left: -15px;
    top: 4px;
    width: 5px;
    height: 5px;
    border-radius: 50%;
    background: #f08a24;
}

.links a {
    display: block;
    max-width: 160px;
}

.more {
    display: block;
    padding: 2px 0 0 29px;
    color: #8e9097;
}

.search {
    padding: 11px 6px 4px 8px;
}

.search label,
.search p {
    display: block;
    white-space: nowrap;
}

.search-row {
    display: flex;
    gap: 6px;
    margin: 4px 0 5px;
}

.search-row input {
    flex: 1;
    min-width: 0;
    height: 20px;
    padding: 0 3px;
    border: 1px solid #7f9db9;
    background: #fff;
}

.search-row button {
    width: 19px;
    height: 19px;
    border: 1px solid #1d6a24;
    background: linear-gradient(135deg, #6cc06c, #1f8a2c);
}

.search-row svg {
    width: 17px;
    height: 17px;
}

.open {
    margin-top: 9px;
}

.open h3 {
    height: 19px;
    padding-left: 8px;
    border-bottom: 1px solid #fff;
    font-size: 16px;
    font-weight: normal;
    line-height: 19px;
    color: #0a246a;
    background: linear-gradient(90deg, #cfe0fb 20%, #6389dc);
}

.files {
    padding: 6px 0 0 29px;
    line-height: 18px;
}

.action {
    display: flex;
    align-items: center;
    gap: 4px;
    height: 14px;
    padding-left: 9px;
}

.open hr {
    margin: 8px 0 9px 9px;
    border: none;
    border-top: 1px solid #fff;
}

.create {
    margin-bottom: 7px;
}

/* status bar */
.statusbar {
    display: flex;
    gap: 5px;
    height: 21px;
    padding: 3px 5px 1px;
    border-top: 1px solid #fff;
    background: #ece9d8;
}

.cell {
    display: flex;
    align-items: center;
    justify-content: center;
    border: 1px solid #d3d0bf;
    white-space: nowrap;
    overflow: hidden;
}

.cell.where,
.cell.pos {
    display: grid;
    justify-content: start;
}

.where {
    grid-template-columns: 69px 75px auto;
    width: 188px;
    padding-left: 4px;
}

.pos {
    grid-template-columns: 63px 43px auto;
    width: 162px;
    padding-left: 2px;
}

.mode {
    width: 25px;
    color: #aca899;
}

.lang {
    width: 66px;
}

.book {
    width: 44px;
}

.wide-blank {
    width: 37px;
}

.blank {
    width: 28px;
}
```
